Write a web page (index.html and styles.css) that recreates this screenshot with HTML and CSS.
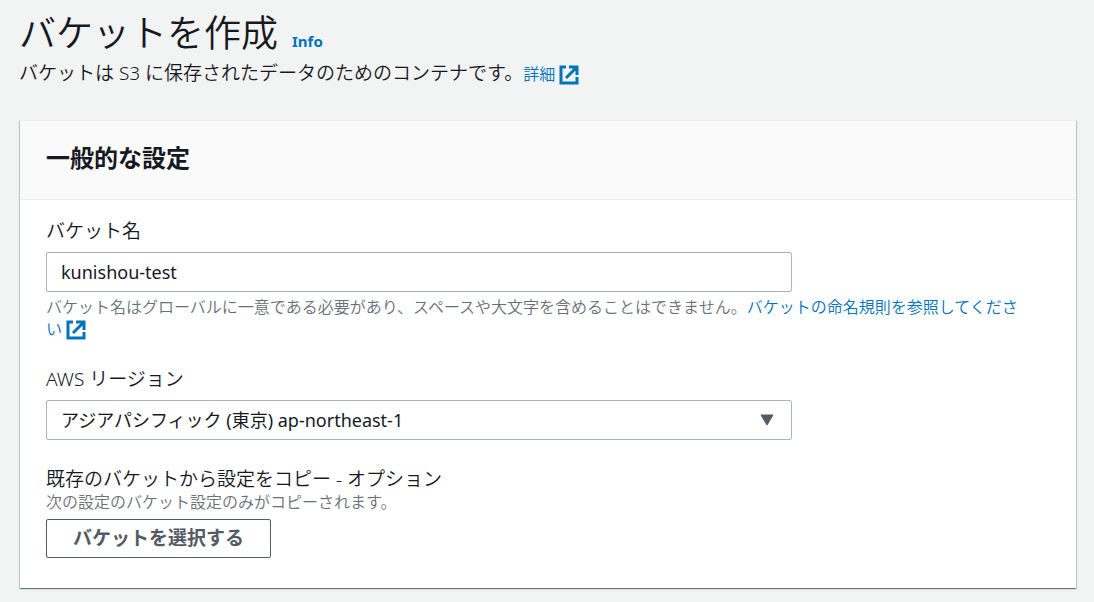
FILE: index.html
```html
<!DOCTYPE html>
<html lang="ja">
<head>
<meta charset="utf-8">
<meta name="viewport" content="width=device-width, initial-scale=1">
<title>バケットを作成</title>
<link rel="stylesheet" href="styles.css">
</head>
<body>
<svg class="sprite" aria-hidden="true">
  <symbol id="external" viewBox="0 0 20 20">
    <path d="M7 2H2v16h16v-6M10 2h8v8M17 3 7 13" fill="none" stroke="currentColor" stroke-width="3"/>
  </symbol>
</svg>
<main class="page">
  <header class="page-header">
    <div class="title-row">
      <h1 class="title">バケットを作成</h1>
      <a class="info" href="#">Info</a>
    </div>
    <p class="intro">バケットは S3 に保存されたデータのためのコンテナです。<a class="link" href="#">詳細 <svg class="external" aria-hidden="true"><use href="#external"/></svg></a></p>
  </header>
  <section class="card">
    <h2 class="card-header">一般的な設定</h2>
    <form class="card-body">
      <div class="field">
        <label class="label" for="bucket">バケット名</label>
        <input class="control" id="bucket" type="text" value="kunishou-test">
        <p class="hint">バケット名はグローバルに一意である必要があり、スペースや大文字を含めることはできません。<a class="link" href="#">バケットの命名規則を参照してくださ<span class="keep">い <svg class="external" aria-hidden="true"><use href="#external"/></svg></span></a></p>
      </div>
      <div class="field">
        <label class="label" for="region">AWS リージョン</label>
        <div class="select">
          <select class="control" id="region"><option>アジアパシフィック (東京) ap-northeast-1</option></select>
          <svg class="arrow" viewBox="0 0 14 12" aria-hidden="true"><path d="M1 1h12L7 11z" fill="currentColor" stroke="currentColor" stroke-linejoin="round"/></svg>
        </div>
      </div>
      <div class="field">
        <label class="label copy-label" for="choose">既存のバケットから設定をコピー - オプション</label>
        <p class="hint copy-hint">次の設定のバケット設定のみがコピーされます。</p>
        <button class="button" id="choose" type="button">バケットを選択する</button>
      </div>
    </form>
  </section>
</main>
</body>
</html>
```
FILE: styles.css
```css
* {
  box-sizing: border-box;
}

body {
  margin: 0;
  background: #f2f3f3;
  color: #16191f;
  font-family: "Noto Sans", "Noto Sans CJK JP", sans-serif;
  font-size: 18px;
  font-weight: 350;
  line-height: 24px;
}

h1, h2, p {
  margin: 0;
}

.sprite {
  display: none;
}

.page {
  padding: 7px 18px 12px 19px;
}

.page-header {
  margin-bottom: 33px;
}

.title-row {
  display: flex;
  align-items: baseline;
  gap: 14px;
  margin-bottom: 1px;
}

.title {
  font-size: 37px;
  font-weight: 350;
  line-height: 52px;
}

.info {
  color: #0073bb;
  font-size: 15px;
  font-weight: 700;
  text-decoration: none;
}

.intro {
  font-size: 19px;
  line-height: 26px;
}

.link {
  color: #0073bb;
  font-size: 16px;
  text-decoration: none;
}

.keep {
  white-space: nowrap;
}

.external {
  width: 20px;
  height: 20px;
  vertical-align: -5px;
}

.card {
  margin-left: 1px;
  background: #fff;
  border-top: 1px solid #eaeded;
  box-shadow: 0 1px 1px #001c2466, 1px 1px 1px #001c2426, -1px 1px 1px #001c2426;
}

.card-header {
  padding: 20px 26px 24px;
  background: #fafafa;
  border-bottom: 1px solid #eaeded;
  font-size: 24px;
  font-weight: 700;
  line-height: 34px;
}

.card-body {
  display: flex;
  flex-direction: column;
  gap: 27px;
  padding: 19px 26px 30px;
}

.label {
  display: block;
  margin-bottom: 9px;
  font-size: 19px;
}

.control {
  display: block;
  width: 746px;
  max-width: 100%;
  height: 40px;
  padding: 0 14px;
  background: #fff;
  border: 1px solid #aab7b8;
  border-radius: 2px;
  color: #16191f;
  font: inherit;
  font-weight: 400;
}

.select {
  display: grid;
  width: 746px;
  max-width: 100%;
  align-items: center;
}

.select .control {
  grid-area: 1 / 1;
  appearance: none;
}

.arrow {
  grid-area: 1 / 1;
  justify-self: end;
  width: 14px;
  height: 12px;
  margin-right: 18px;
  color: #545b64;
  pointer-events: none;
}

.hint {
  margin-top: 4px;
  color: #687078;
  font-size: 16px;
  line-height: 22px;
}

.copy-label {
  margin-bottom: 0;
}

.copy-hint {
  margin: 0 0 6px;
}

.button {
  height: 39px;
  padding: 0 26px 2px;
  background: #fff;
  border: 1px solid #545b64;
  border-radius: 2px;
  color: #545b64;
  font: inherit;
  font-size: 19px;
  font-weight: 700;
}
```
